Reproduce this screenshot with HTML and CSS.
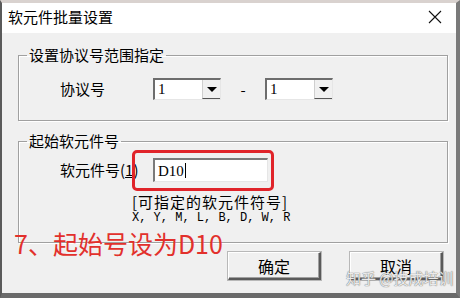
FILE: index.html
```html
<!DOCTYPE html>
<html lang="zh-CN">

<head>
    <meta charset="UTF-8">
    <meta name="viewport" content="width=device-width, initial-scale=1.0">
    <title>软元件批量设置</title>
    <link rel="stylesheet" href="styles.css">
</head>

<body>
    <div class="window">
        <div class="titlebar">
            <span class="title">软元件批量设置</span>
            <svg class="close" width="14" height="14" viewBox="0 0 14 14">
                <path d="M1 1 L13 13 M13 1 L1 13" stroke="#111" stroke-width="1.1" fill="none" />
            </svg>
        </div>

        <div class="dialog">
            <fieldset class="group group-range">
                <legend>设置协议号范围指定</legend>
                <div class="row">
                    <span class="label">协议号</span>
                    <div class="combo">
                        <span class="combo-value">1</span>
                        <span class="combo-btn"><i class="arrow"></i></span>
                    </div>
                    <span class="dash">-</span>
                    <div class="combo">
                        <span class="combo-value">1</span>
                        <span class="combo-btn"><i class="arrow"></i></span>
                    </div>
                </div>
            </fieldset>

            <fieldset class="group group-start">
                <legend>起始软元件号</legend>
                <div class="row">
                    <span class="label">软元件号(<u>1</u>)</span>
                    <div class="textbox">D10<span class="caret"></span></div>
                </div>
                <div class="hint">
                    <div class="hint-title">[可指定的软元件符号]</div>
                    <div class="hint-list">X, Y, M, L, B, D, W, R</div>
                </div>
                <div class="mark"></div>
            </fieldset>

            <div class="buttons">
                <button class="btn">确定</button>
                <button class="btn">取消</button>
            </div>

            <div class="note">7、起始号设为D10</div>
            <div class="watermark">知乎 @技成培训</div>
        </div>
    </div>
</body>

</html>
```

FILE: styles.css
```css
body {
    margin: 0;
    padding: 0;
    background-color: #6e6e6e;
    font-family: "Noto Sans CJK SC", "Noto Sans", sans-serif;
}

.window {
    width: 460px;
    height: 298px;
    box-sizing: border-box;
    border-top: 3px solid #d9d2cf;
    border-left: 2px solid #5a5a5a;
    border-right: 4px solid #7a7a7a;
    border-bottom: 5px solid #6a6a6a;
    display: flex;
    flex-direction: column;
    overflow: hidden;
}

.titlebar {
    height: 30px;
    background-color: #ffffff;
    display: flex;
    align-items: center;
    justify-content: space-between;
    padding: 0 14px 0 6px;
    flex-shrink: 0;
}

.title {
    font-size: 15px;
    color: #000;
    line-height: 20px;
    margin-top: -2px;
}

.close {
    display: block;
    margin-top: -2px;
}

.dialog {
    position: relative;
    flex: 1;
    background-color: #f0f0f0;
    padding: 12px 8px 0 16px;
}

.group {
    margin: 0;
    padding: 0;
    border: 1px solid #a0a0a0;
    box-shadow: inset 1px 1px 0 #ffffff, 1px 1px 0 #ffffff;
    min-width: 0;
}

.group legend {
    margin-left: 8px;
    padding: 0 2px;
    font-size: 15px;
    line-height: 20px;
    color: #000;
}

.group-range {
    padding: 13px 0 20px 0;
}

.group-start {
    position: relative;
    margin-top: 10px;
    padding: 7px 0 0 0;
    height: 112px;
    box-sizing: border-box;
}

.row {
    display: flex;
    align-items: center;
    padding-left: 41px;
}

.label {
    font-size: 15px;
    color: #000;
    width: 93px;
    line-height: 22px;
}

.label u {
    text-decoration: underline;
}

.combo {
    width: 68px;
    height: 22px;
    box-sizing: border-box;
    background-color: #fff;
    border-top: 2px solid #6d6d6d;
    border-left: 2px solid #6d6d6d;
    border-right: 1px solid #e6e6e6;
    border-bottom: 1px solid #e6e6e6;
    display: flex;
    align-items: stretch;
}

.combo-value {
    flex: 1;
    font-family: "Liberation Serif", serif;
    font-size: 15px;
    line-height: 19px;
    padding-left: 3px;
}

.combo-btn {
    width: 17px;
    background-color: #f0f0f0;
    border-left: 1px solid #cfcfcf;
    border-bottom: 1px solid #555;
    display: flex;
    align-items: center;
    justify-content: center;
}

.arrow {
    width: 0;
    height: 0;
    border-left: 5px solid transparent;
    border-right: 5px solid transparent;
    border-top: 5px solid #000;
}

.dash {
    width: 44px;
    text-align: center;
    font-size: 15px;
    color: #000;
}

.textbox {
    width: 115px;
    height: 24px;
    box-sizing: border-box;
    background-color: #fff;
    border-top: 2px solid #7a7a7a;
    border-left: 2px solid #7a7a7a;
    border-right: 1px solid #e6e6e6;
    border-bottom: 1px solid #e6e6e6;
    font-family: "Liberation Serif", serif;
    font-size: 15px;
    line-height: 20px;
    padding-left: 3px;
    display: flex;
    align-items: center;
}

.caret {
    display: inline-block;
    width: 1px;
    height: 15px;
    background-color: #000;
    margin-left: 1px;
}

.hint {
    padding-left: 113px;
    margin-top: 11px;
}

.hint-title {
    font-size: 15px;
    line-height: 18px;
    letter-spacing: 1px;
    color: #000;
}

.hint-list {
    font-family: "Liberation Mono", monospace;
    font-size: 12px;
    line-height: 12px;
    margin-top: 1px;
    color: #000;
}

.mark {
    position: absolute;
    left: 113px;
    top: -1px;
    width: 142px;
    height: 41px;
    box-sizing: border-box;
    border: 3px solid #e0242a;
    border-radius: 5px;
}

.buttons {
    display: flex;
    justify-content: flex-end;
    gap: 29px;
    margin-top: 9px;
    padding-right: 5px;
}

.btn {
    width: 93px;
    height: 28px;
    background-color: #f0f0f0;
    border-top: 1px solid #ffffff;
    border-left: 1px solid #ffffff;
    border-right: 2px solid #5a5a5a;
    border-bottom: 2px solid #5a5a5a;
    box-shadow: inset -1px -1px 0 #a0a0a0, 0 0 0 1px #b8b8b8;
    font-family: "Noto Sans CJK SC", sans-serif;
    font-size: 16px;
    color: #000;
    padding: 0;
    line-height: 22px;
}

.note {
    position: absolute;
    left: 12px;
    top: 195px;
    font-size: 25px;
    line-height: 30px;
    color: #e2302c;
}

.watermark {
    position: absolute;
    left: 344px;
    top: 236px;
    font-size: 15px;
    line-height: 18px;
    color: rgba(255, 255, 255, 0.85);
    text-shadow: 0 0 1px #777, 0 0 1px #777;
}
```
